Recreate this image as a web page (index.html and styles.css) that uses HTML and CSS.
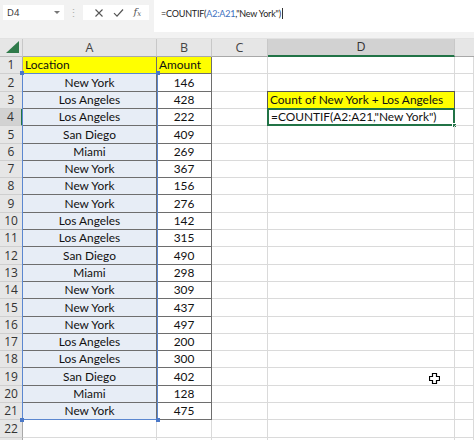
FILE: index.html
```html
<!DOCTYPE html>
<html>
<head>
<meta charset="utf-8">
<link rel="stylesheet" href="styles.css">
</head>
<body>
<div class="app">
  <div class="toolbar">
    <div class="namebox"><span>D4</span><svg class="dd" width="6" height="4" viewBox="0 0 6 4"><path d="M0 0H6L3 3Z" fill="#777"/></svg></div>
    <div class="dots">⋮</div>
    <div class="btnbox">
      <svg width="10" height="10" viewBox="0 0 10 10"><path d="M1.5 1.5L8.5 8.5M8.5 1.5L1.5 8.5" stroke="#555" stroke-width="1.1"/></svg>
      <svg width="11" height="10" viewBox="0 0 11 10"><path d="M1 5.2L4 8.2L10 1.5" stroke="#555" stroke-width="1.2" fill="none"/></svg>
      <span class="fx">f<sub>x</sub></span>
    </div>
    <div class="formula">=COUNTIF(<span class="ref">A2:A21</span>,"New York")<span class="caret"></span></div>
  </div>
  <div class="sheet">
    <div class="row hdr">
      <div class="corner"><svg width="14" height="13" viewBox="0 0 14 13"><path d="M13 0V12H0Z" fill="#2f7a4a"/></svg></div>
      <div class="ch">A</div><div class="ch">B</div><div class="ch">C</div><div class="ch sel">D</div><div class="ch last"></div>
    </div>
    <div class="row"><div class="rh">1</div><div class="c t yl left">Location</div><div class="c t yl left">Amount</div><div class="c"></div><div class="c"></div><div class="c"></div></div>
    <div class="row h18"><div class="rh">2</div><div class="c t bl">New York</div><div class="c t">146</div><div class="c"></div><div class="c"></div><div class="c"></div></div>
    <div class="row"><div class="rh">3</div><div class="c t bl">Los Angeles</div><div class="c t">428</div><div class="c"></div><div class="c yl left box">Count of New York + Los Angeles</div><div class="c"></div></div>
    <div class="row"><div class="rh rsel">4</div><div class="c t bl">Los Angeles</div><div class="c t">222</div><div class="c"></div><div class="c left active">=COUNTIF(A2:A21,"New York")<span class="handle"></span></div><div class="c"></div></div>
    <div class="row h18"><div class="rh">5</div><div class="c t bl">San Diego</div><div class="c t">409</div><div class="c"></div><div class="c"></div><div class="c"></div></div>
    <div class="row"><div class="rh">6</div><div class="c t bl">Miami</div><div class="c t">269</div><div class="c"></div><div class="c"></div><div class="c"></div></div>
    <div class="row"><div class="rh">7</div><div class="c t bl">New York</div><div class="c t">367</div><div class="c"></div><div class="c"></div><div class="c"></div></div>
    <div class="row"><div class="rh">8</div><div class="c t bl">New York</div><div class="c t">156</div><div class="c"></div><div class="c"></div><div class="c"></div></div>
    <div class="row h18"><div class="rh">9</div><div class="c t bl">New York</div><div class="c t">276</div><div class="c"></div><div class="c"></div><div class="c"></div></div>
    <div class="row"><div class="rh">10</div><div class="c t bl">Los Angeles</div><div class="c t">142</div><div class="c"></div><div class="c"></div><div class="c"></div></div>
    <div class="row"><div class="rh">11</div><div class="c t bl">Los Angeles</div><div class="c t">315</div><div class="c"></div><div class="c"></div><div class="c"></div></div>
    <div class="row h18"><div class="rh">12</div><div class="c t bl">San Diego</div><div class="c t">490</div><div class="c"></div><div class="c"></div><div class="c"></div></div>
    <div class="row"><div class="rh">13</div><div class="c t bl">Miami</div><div class="c t">298</div><div class="c"></div><div class="c"></div><div class="c"></div></div>
    <div class="row"><div class="rh">14</div><div class="c t bl">New York</div><div class="c t">309</div><div class="c"></div><div class="c"></div><div class="c"></div></div>
    <div class="row h18"><div class="rh">15</div><div class="c t bl">New York</div><div class="c t">437</div><div class="c"></div><div class="c"></div><div class="c"></div></div>
    <div class="row"><div class="rh">16</div><div class="c t bl">New York</div><div class="c t">497</div><div class="c"></div><div class="c"></div><div class="c"></div></div>
    <div class="row"><div class="rh">17</div><div class="c t bl">Los Angeles</div><div class="c t">200</div><div class="c"></div><div class="c"></div><div class="c"></div></div>
    <div class="row"><div class="rh">18</div><div class="c t bl">Los Angeles</div><div class="c t">300</div><div class="c"></div><div class="c"></div><div class="c"></div></div>
    <div class="row h18"><div class="rh">19</div><div class="c t bl">San Diego</div><div class="c t">402</div><div class="c"></div><div class="c"></div><div class="c"></div></div>
    <div class="row"><div class="rh">20</div><div class="c t bl">Miami</div><div class="c t">128</div><div class="c"></div><div class="c"></div><div class="c"></div></div>
    <div class="row"><div class="rh">21</div><div class="c t bl">New York</div><div class="c t">475</div><div class="c"></div><div class="c"></div><div class="c"></div></div>
    <div class="row h18"><div class="rh">22</div><div class="c"></div><div class="c"></div><div class="c"></div><div class="c"></div><div class="c"></div></div>
    <div class="row"><div class="rh"></div><div class="c"></div><div class="c"></div><div class="c"></div><div class="c"></div><div class="c"></div></div>
    <div class="range"><span class="sq tl"></span><span class="sq tr"></span><span class="sq bl2"></span><span class="sq br"></span></div>
    <svg class="cursor" width="11" height="11" viewBox="0 0 11 11"><path d="M3.5 0.5H7.5V3.5H10.5V7.5H7.5V10.5H3.5V7.5H0.5V3.5H3.5Z" fill="#fff" stroke="#000" stroke-width="1.2"/></svg>
  </div>
</div>
</body>
</html>
```
FILE: styles.css
```css
* { box-sizing: border-box; }
html, body { margin: 0; padding: 0; }
body { width: 474px; height: 440px; overflow: hidden; background: #fff; font-family: "Lato", "Liberation Sans", sans-serif; }
.app { width: 474px; height: 440px; overflow: hidden; }

.toolbar { height: 39px; background: #f2f2f2; display: flex; align-items: flex-start; padding-left: 3px; border-bottom: 1px solid #e2e2e2; }
.namebox { margin-top: 5px; width: 61px; height: 15px; background: #fff; display: flex; align-items: center; justify-content: space-between; padding: 0 4px; font-family: "Open Sans", sans-serif; font-size: 9.5px; color: #333; }
.dots { margin-top: 5px; width: 19px; text-align: center; color: #b0b0b0; font-size: 11px; line-height: 15px; }
.btnbox { margin-top: 5px; width: 66px; height: 15px; background: #fff; display: flex; align-items: center; justify-content: space-around; padding: 0 3px 0 6px; }
.fx { font-family: "DejaVu Serif", serif; font-style: italic; font-size: 10px; color: #555; line-height: 10px; }
.fx sub { font-size: 7px; vertical-align: -1px; }
.formula { margin-left: 5px; flex: 1; height: 32px; background: #fff; font-family: "Lato", sans-serif; font-size: 9px; letter-spacing: -0.2px; color: #222; padding: 6px 0 0 7px; line-height: 15px; }
.ref { color: #3c70c0; }
.caret { display: inline-block; width: 1px; height: 11px; background: #333; vertical-align: -2px; margin-left: 1px; }

.sheet { position: relative; font-size: 11.9px; color: #111; }
.row { display: grid; grid-template-columns: 23px 134px 55px 56px 187px 1fr; grid-template-rows: 100%; height: 17px; }
.row.h18 { height: 18px; }
.row.hdr { height: 18px; }
.corner { background: #e6e6e6; border-right: 1px solid #c8c8c8; border-bottom: 1px solid #bdbdbd; display: flex; align-items: flex-end; justify-content: flex-end; padding: 0 2px 2px 0; }
.ch { background: #e6e6e6; border-right: 1px solid #c8c8c8; border-bottom: 1px solid #a8a8a8; text-align: center; font-size: 12.5px; color: #444; line-height: 17px; font-family: "Open Sans", sans-serif; }
.ch.sel { background: #d2d2d2; border-bottom: 2px solid #217346; color: #333; line-height: 16px; }
.ch.last { border-right: none; }
.rh { background: #e6e6e6; border-right: 1px solid #a8a8a8; border-bottom: 1px solid #cfcfcf; text-align: center; font-size: 12px; color: #333; line-height: 16px; font-family: "Open Sans", sans-serif; }
.h18 .rh { line-height: 17px; }
.rh.rsel { background: #d2d2d2; border-right: 2px solid #217346; }
.c { border-right: 1px solid #dadada; border-bottom: 1px solid #dadada; line-height: 16px; white-space: nowrap; text-align: center; position: relative; }
.h18 .c { line-height: 17px; }
.c.t { border-right-color: #6e6e6e; border-bottom-color: #6e6e6e; }
.c.yl { background: #ffff00; }
.c.left { text-align: left; padding-left: 2px; }
.c.bl { background: #e7edf6; }
.c.box { border: 1px solid #555; border-bottom-color: #6e6e6e; margin-top: -1px; margin-left: -1px; height: calc(100% + 1px); }
.c.active { border: 2px solid #217346; margin-left: -1px; margin-top: -1px; height: calc(100% + 1px); line-height: 14px; }
.handle { position: absolute; right: -4px; bottom: -4px; width: 5px; height: 5px; background: #217346; border: 1px solid #fff; }

.range { position: absolute; left: 22px; top: 34px; width: 136px; height: 347px; border: 1.5px solid #5b87d0; pointer-events: none; }
.sq { position: absolute; width: 4px; height: 4px; background: #4a78c8; }
.sq.tl { left: -3px; top: -3px; }
.sq.tr { right: -3px; top: -3px; }
.sq.bl2 { left: -3px; bottom: -3px; }
.sq.br { right: -3px; bottom: -3px; }
.cursor { position: absolute; left: 429px; top: 334px; }
```
